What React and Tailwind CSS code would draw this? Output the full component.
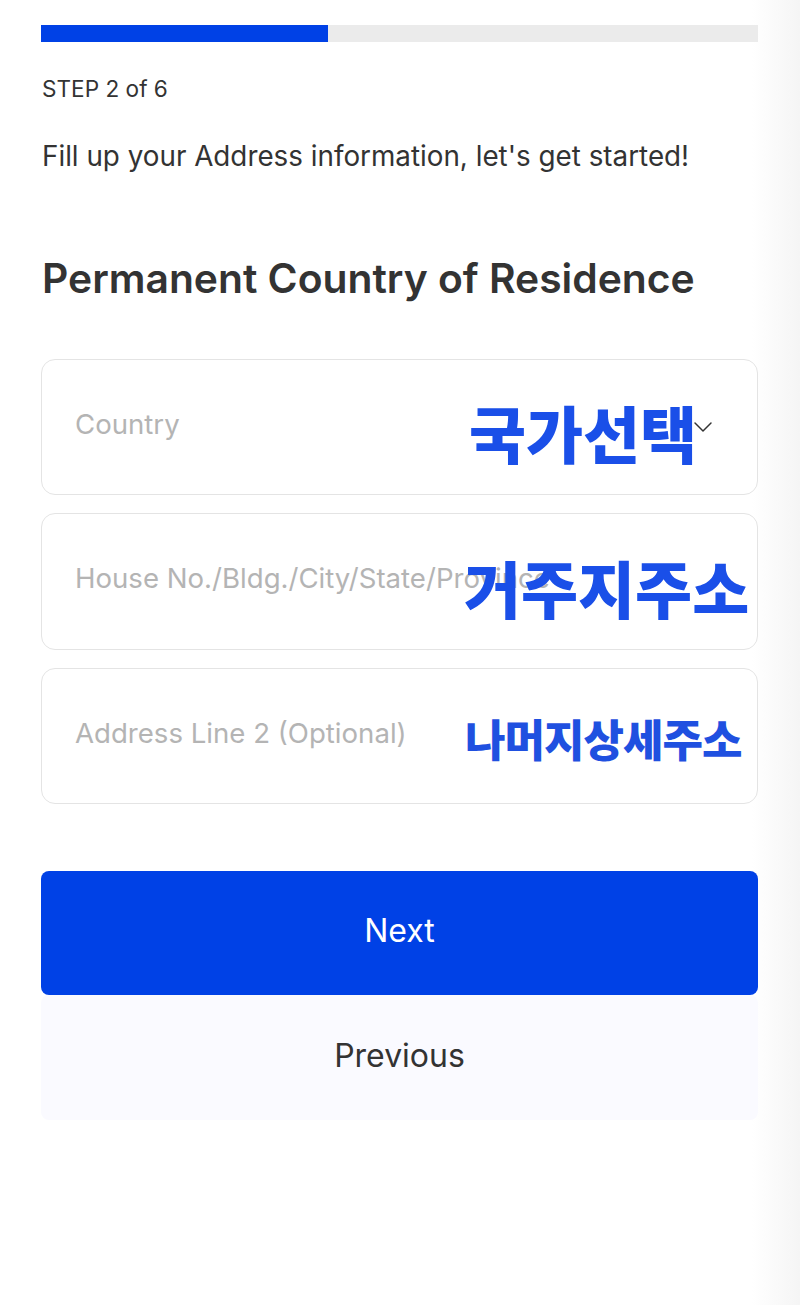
import { ChevronDown } from 'lucide-react'

const sans = "font-['Inter',sans-serif]"
const hangul = "font-['Noto_Sans_CJK_KR',sans-serif]"

function Field({ label, height, children }) {
  return (
    <div className={`relative flex items-center rounded-[14px] border border-[#e4e4e4] bg-white pl-[33px] pb-[5px] ${height}`}>
      <span className="text-[27.6px] leading-none text-[#b4b4b4]">{label}</span>
      {children}
    </div>
  )
}

export default function App() {
  return (
    <div className={`${sans} relative h-[1305px] w-[800px] overflow-hidden bg-gradient-to-r from-white from-[94%] to-[#f5f5f5] text-[#333333]`}>
      <div className="flex flex-col pl-[41px] pr-[42px] pt-[25px]">
        <div className="h-[17px] w-full bg-[#ebebeb]">
          <div className="h-full w-[287px] bg-[#0041e6]" />
        </div>

        <p className="mt-[32px] pl-px text-[22.6px] leading-[30px]">STEP 2 of 6</p>
        <p className="mt-[34px] pl-px text-[27.8px] leading-[36px]">Fill up your Address information, let's get started!</p>
        <h1 className="mt-[79px] pl-px text-[40.8px] font-semibold leading-[50px]">Permanent Country of Residence</h1>

        <div className="mt-[56px] flex flex-col gap-[18px]">
          <Field label="Country" height="h-[136px]">
            <ChevronDown className="absolute right-[38px] top-[51px] h-[32px] w-[32px] text-[#333333]" strokeWidth={1.1} />
            <span className={`${hangul} absolute left-[427px] top-[30px] text-[62px] font-black leading-[84px] text-[#1a4fe8]`}>국가선택</span>
          </Field>
          <Field label="House No./Bldg./City/State/Province" height="h-[137px]">
            <span className={`${hangul} absolute left-[422px] top-[31px] text-[62px] font-black leading-[84px] text-[#1a4fe8]`}>거주지주소</span>
          </Field>
          <Field label="Address Line 2 (Optional)" height="h-[136px]">
            <span className={`${hangul} absolute left-[423px] top-[38px] text-[44px] font-black leading-[62px] tracking-[-1px] text-[#1f50e0]`}>나머지상세주소</span>
          </Field>
        </div>

        <button className="mt-[67px] h-[124px] w-full rounded-[8px] bg-[#0041e6] pb-[4px] text-[32px] text-white">Next</button>
        <button className="h-[125px] w-full rounded-[8px] bg-[#fafaff] pb-[4px] text-[32px] text-[#333333]">Previous</button>
      </div>
    </div>
  )
}
